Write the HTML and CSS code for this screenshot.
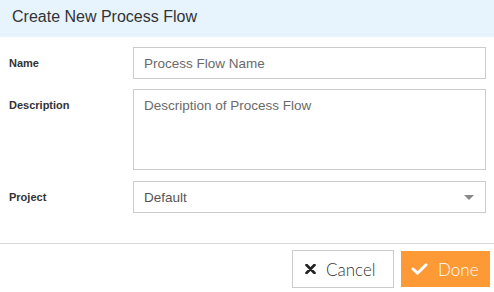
FILE: index.html
```html
<!DOCTYPE html>
<html>
<head>
  <meta charset="UTF-8">
  <title>Create New Process Flow</title>
  <link rel="stylesheet" href="styles.css">
</head>
<body>
  <div class="dialog">
    <div class="dialog-header">Create New Process Flow</div>

    <form class="dialog-body">
      <div class="field">
        <label for="name">Name</label>
        <input type="text" id="name" placeholder="Process Flow Name">
      </div>

      <div class="field field-top">
        <label for="description">Description</label>
        <textarea id="description" placeholder="Description of Process Flow"></textarea>
      </div>

      <div class="field">
        <label for="project">Project</label>
        <div class="select">
          <span>Default</span>
          <span class="caret"></span>
        </div>
      </div>
    </form>

    <div class="dialog-footer">
      <button type="button" class="btn btn-cancel">
        <svg width="11" height="10" viewBox="0 0 11 10"><path d="M1.5 1 L9.5 9 M9.5 1 L1.5 9" stroke="#222" stroke-width="2.6" stroke-linecap="round"/></svg>
        Cancel
      </button>
      <button type="button" class="btn btn-done">
        <svg width="17" height="12" viewBox="0 0 17 12"><path d="M2 6 L6.5 10.2 L15 1.8" stroke="#fff" stroke-width="3" fill="none" stroke-linecap="round" stroke-linejoin="round"/></svg>
        Done
      </button>
    </div>
  </div>
</body>
</html>
```

FILE: styles.css
```css
body {
  margin: 0;
  font-family: 'Liberation Sans', Arial, sans-serif;
  color: #333;
  background: #fff;
}

.dialog-header {
  height: 37px;
  line-height: 33px;
  padding-left: 12px;
  background: #e8f4fd;
  font-size: 16px;
  color: #333;
}

.dialog-body {
  padding: 10px 8px 0 9px;
}

.field {
  display: flex;
  align-items: center;
  margin-bottom: 10px;
}

.field-top {
  align-items: flex-start;
  margin-bottom: 11px;
}

.field-top label {
  margin-top: 10px;
}

.field:last-child {
  margin-bottom: 0;
}

label {
  width: 124px;
  flex: none;
  font-size: 11px;
  font-weight: bold;
  color: #333;
}

input[type="text"],
textarea,
.select {
  flex: 1;
  box-sizing: border-box;
  margin: 0;
  border: 1px solid #ccc;
  border-radius: 0;
  font-family: 'Liberation Sans', Arial, sans-serif;
  font-size: 13.5px;
  color: #555;
  background: #fff;
  outline: none;
}

input[type="text"] {
  height: 32px;
  padding: 0 10px;
}

textarea {
  height: 81px;
  padding: 8px 10px;
  resize: none;
}

::placeholder {
  color: #6a6a6a;
  opacity: 1;
}

.select {
  height: 32px;
  padding: 0 11px 0 10px;
  display: flex;
  align-items: center;
  justify-content: space-between;
}

.caret {
  width: 0;
  height: 0;
  border-left: 5px solid transparent;
  border-right: 5px solid transparent;
  border-top: 5px solid #888;
}

.dialog-footer {
  margin-top: 30px;
  border-top: 1px solid #d6d6d6;
  padding: 6px 4px 0 0;
  display: flex;
  justify-content: flex-end;
  align-items: center;
  gap: 7px;
}

.btn {
  display: flex;
  align-items: center;
  gap: 10px;
  box-sizing: border-box;
  font-family: 'Lato', sans-serif;
  font-weight: 300;
  font-size: 17px;
  cursor: pointer;
  border-radius: 0;
}

.btn-cancel {
  width: 102px;
  height: 38px;
  padding: 0 0 0 12px;
  background: #fff;
  border: 1px solid #ccc;
  color: #333;
}

.btn-done {
  width: 89px;
  height: 36px;
  padding: 0 0 0 10px;
  background: #fd9a36;
  border: none;
  color: #fff;
}
```
